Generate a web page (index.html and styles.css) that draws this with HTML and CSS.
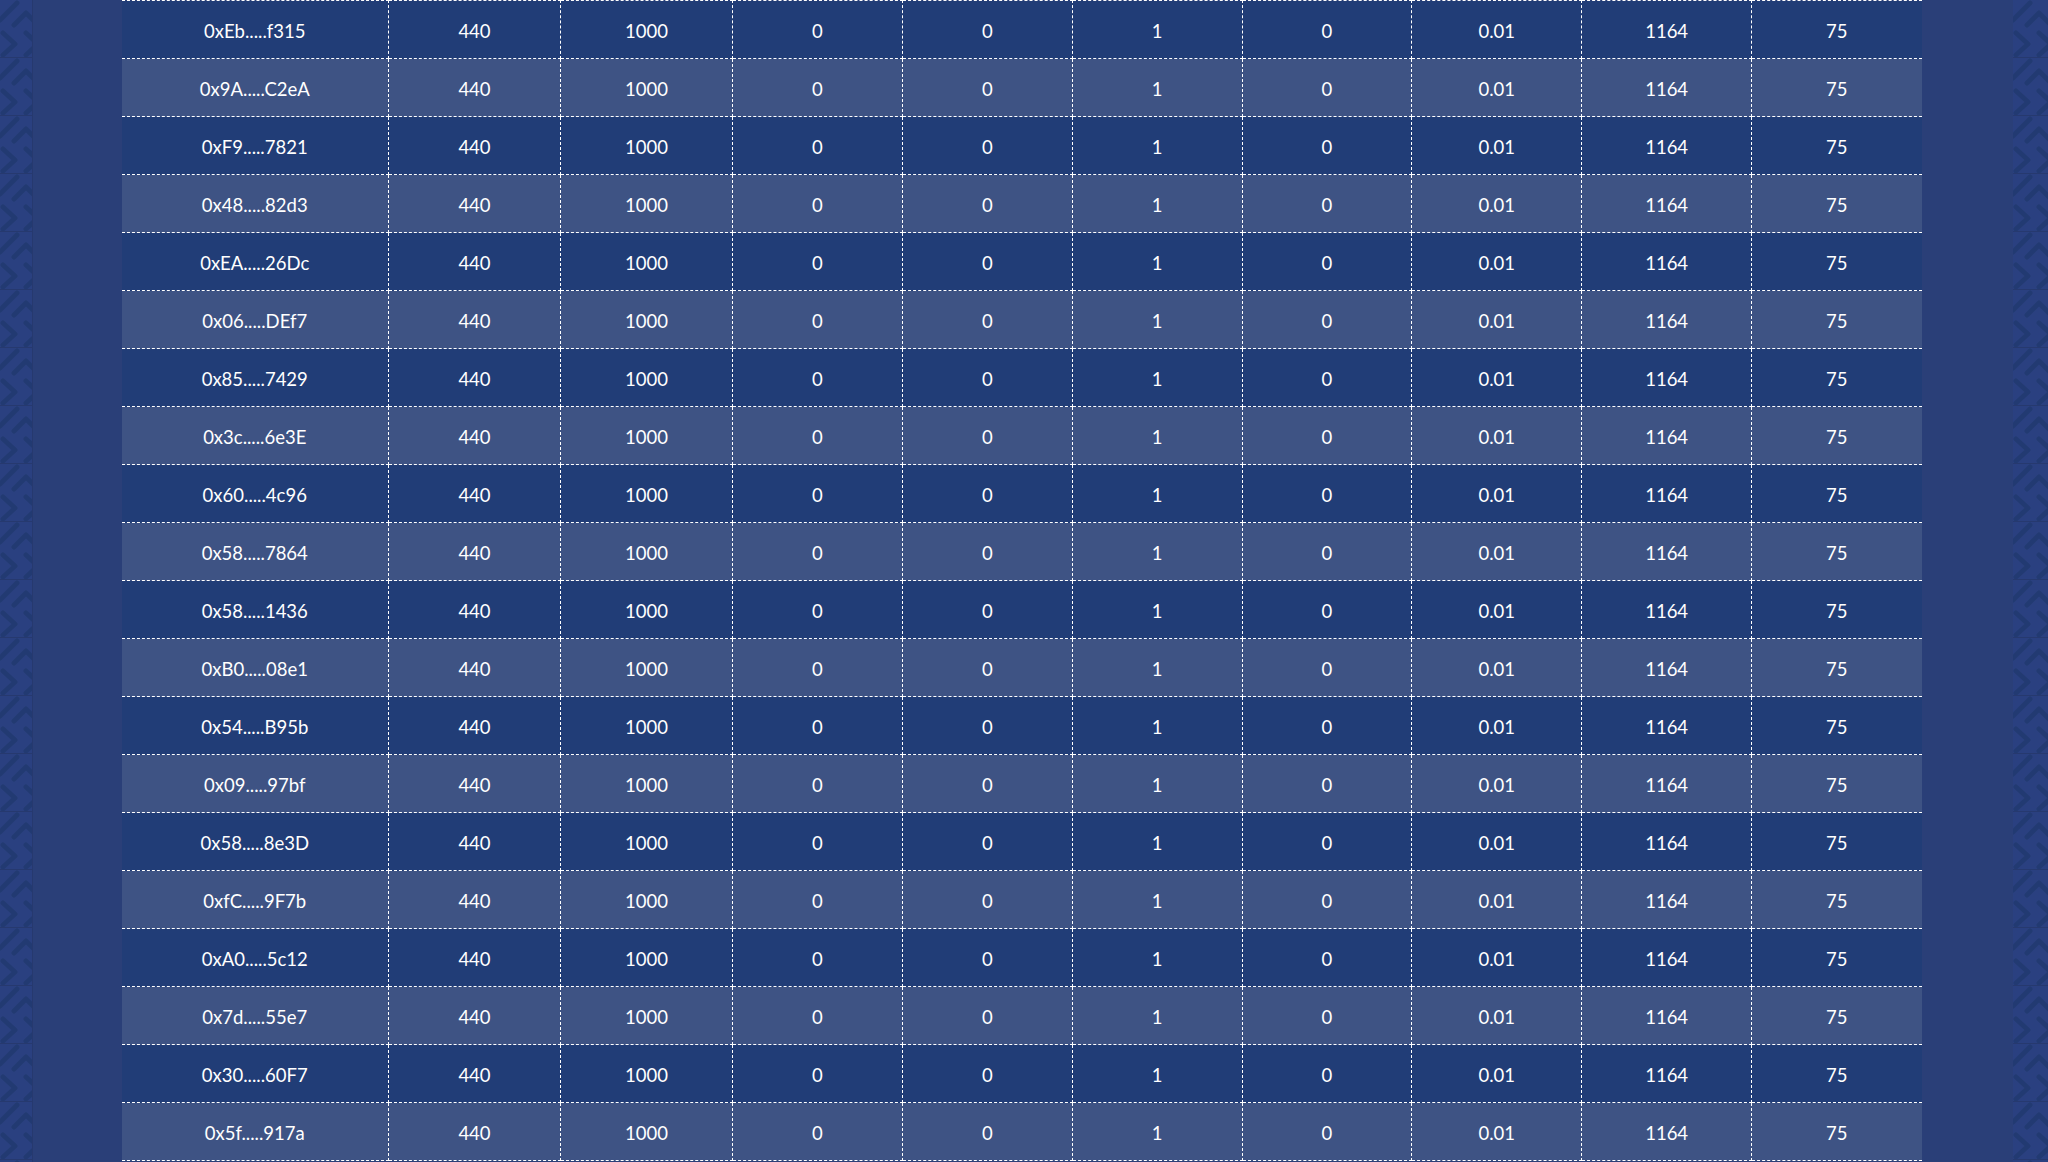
FILE: index.html
```html
<!DOCTYPE html>
<html>
<head>
<meta charset="utf-8">
<link rel="stylesheet" href="styles.css">
</head>
<body>
<div class="page">
  <div class="strip strip-left">
    <svg class="pat" xmlns="http://www.w3.org/2000/svg">
      <defs>
        <pattern id="chev" x="0" y="0" width="35" height="58" patternUnits="userSpaceOnUse">
          <rect width="35" height="58" fill="#2a4080"/>
          <g fill="none" stroke="#223a72" stroke-width="5" stroke-linecap="round" stroke-linejoin="round">
            <path d="M0 20 L17 3"/>
            <path d="M14 25 L26 13 L38 25"/>
            <path d="M3 33 L15 44 L3 55"/>
            <path d="M26 33 L38 44 L26 55"/>
          </g>
          <line x1="0" y1="57.5" x2="35" y2="57.5" stroke="#26396f" stroke-width="1"/>
        </pattern>
      </defs>
      <rect width="100%" height="100%" fill="url(#chev)"/>
    </svg>
  </div>
  <main class="main">
    <table class="grid">
      <colgroup>
        <col class="c-addr">
        <col class="c-wide">
        <col class="c-wide">
        <col span="7">
      </colgroup>
      <tbody id="rows"></tbody>
    </table>
  </main>
  <div class="strip strip-right">
    <svg class="pat" xmlns="http://www.w3.org/2000/svg">
      <rect width="100%" height="100%" fill="url(#chev)"/>
    </svg>
  </div>
</div>
<script src="app.js"></script>
</body>
</html>
```

FILE: app.js
```js
var addrs = ["0xEb.....f315","0x9A.....C2eA","0xF9.....7821","0x48.....82d3","0xEA.....26Dc","0x06.....DEf7","0x85.....7429","0x3c.....6e3E","0x60.....4c96","0x58.....7864","0x58.....1436","0xB0.....08e1","0x54.....B95b","0x09.....97bf","0x58.....8e3D","0xfC.....9F7b","0xA0.....5c12","0x7d.....55e7","0x30.....60F7","0x5f.....917a"];
var vals = ["440","1000","0","0","1","0","0.01","1164","75"];
var tb = document.getElementById("rows");
addrs.forEach(function (a, i) {
  var tr = document.createElement("tr");
  tr.className = i % 2 === 0 ? "dark" : "light";
  [a].concat(vals).forEach(function (v) {
    var td = document.createElement("td");
    td.textContent = v;
    tr.appendChild(td);
  });
  tb.appendChild(tr);
});
```

FILE: styles.css
```css
html, body {
  margin: 0;
  padding: 0;
  height: 100%;
  overflow: hidden;
}
body {
  background: #2a3f78;
  font-family: Lato, "Noto Sans", sans-serif;
  color: #ffffff;
}
.page {
  display: flex;
  height: 1162px;
}
.strip {
  flex: none;
  height: 100%;
}
.strip-left {
  width: 32px;
  border-right: 1px solid #26396f;
}
.strip-right {
  width: 35px;
}
.pat {
  display: block;
  width: 100%;
  height: 100%;
}
.main {
  flex: 1;
  display: flex;
  justify-content: center;
  padding-right: 3px;
}
.grid {
  width: 1800px;
  border-collapse: collapse;
  table-layout: fixed;
  font-size: 18.5px;
  align-self: flex-start;
}
.c-addr {
  width: 267px;
}
.c-wide {
  width: 172px;
}
.grid td {
  height: 55px;
  padding: 2px 0 0;
  text-align: center;
  vertical-align: middle;
  border: 1px dashed #ffffff;
  white-space: nowrap;
}
.grid tr td:first-child {
  border-left: none;
}
.grid tr td:last-child {
  border-right: none;
}
.dark {
  background: #213d77;
}
.light {
  background: #3e5384;
}
```
